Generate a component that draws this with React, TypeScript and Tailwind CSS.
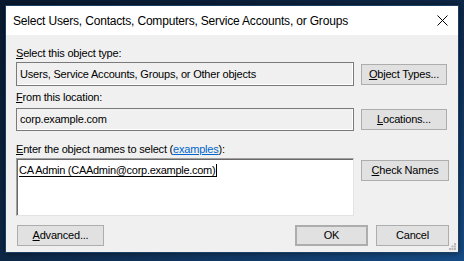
import React from "react";

const F = { fontFamily: '"Liberation Sans", Arial, sans-serif' };

function Btn({ children, w, className = "" }: { children: React.ReactNode; w: string; className?: string }) {
  return (
    <div
      className={`${w} h-[21px] flex items-center justify-center bg-[#e1e1e1] border border-[#adadad] text-[11px] tracking-[-0.2px] text-black ${className}`}
    >
      {children}
    </div>
  );
}

function U({ c }: { c: string }) {
  return <span className="underline underline-offset-[1px]">{c}</span>;
}

export default function App() {
  return (
    <div
      className="w-[464px] h-[261px] overflow-hidden bg-gradient-to-br from-[#0a1a30] via-[#0d2747] to-[#164c86] pt-[5px] pl-[5px]"
      style={F}
    >
      <div className="w-[454px] h-[248px] flex flex-col border border-[#1c3f66] shadow-[0_0_6px_rgba(0,0,0,0.5)]">
        {/* Title bar */}
        <div className="h-[29px] bg-white flex items-center justify-between pl-[7px] pr-[8px]">
          <span className="text-[12px] tracking-[-0.18px] text-black leading-none">
            Select Users, Contacts, Computers, Service Accounts, or Groups
          </span>
          <svg width="11" height="11" viewBox="0 0 11 11" className="mr-[2px]">
            <path d="M0.5 0.5L10.5 10.5M10.5 0.5L0.5 10.5" stroke="#000" strokeWidth="1" />
          </svg>
        </div>
        {/* Body */}
        <div className="flex-1 bg-[#f0f0f0] flex flex-col pl-[10px] pr-[9px] pt-[12px] relative text-[11px] tracking-[-0.2px]">
          <div className="h-[13px] leading-[13px] text-black">
            <U c="S" />elect this object type:
          </div>
          <div className="flex items-center gap-[7px] mt-[2px]">
            <div className="w-[338px] h-[24px] border border-[#7a7a7a] bg-[#f0f0f0] shadow-[inset_-1px_-1px_0_#ffffff] flex items-center pl-[3px] text-black">
              Users, Service Accounts, Groups, or Other objects
            </div>
            <Btn w="w-[86px]">
              <span>
                <U c="O" />bject Types...
              </span>
            </Btn>
          </div>
          <div className="h-[13px] leading-[13px] text-black mt-[5px]">
            <U c="F" />rom this location:
          </div>
          <div className="flex items-center gap-[7px] mt-[4px]">
            <div className="w-[338px] h-[23px] border border-[#7a7a7a] bg-[#f0f0f0] shadow-[inset_-1px_-1px_0_#ffffff] flex items-center pl-[3px] text-black">
              corp.example.com
            </div>
            <Btn w="w-[86px]">
              <span>
                <U c="L" />ocations...
              </span>
            </Btn>
          </div>
          <div className="h-[13px] leading-[13px] text-black mt-[12px]">
            <U c="E" />nter the object names to select (
            <span className="text-[#0066cc] underline">examples</span>):
          </div>
          <div className="flex items-start gap-[7px] mt-[2px]">
            <div className="w-[338px] h-[58px] bg-white border-t border-l border-[#a0a0a0] border-r border-b border-r-[#e3e3e3] border-b-[#e3e3e3] shadow-[inset_1px_1px_0_#696969] pl-[2px] pt-[3px]">
              <span className="inline-block leading-[12px] tracking-[-0.28px] text-black border-b border-black border-r pr-[1px]">
                CA Admin (CAAdmin@corp.example.com)
              </span>
            </div>
            <Btn w="w-[88px]" className="mt-[2px]">
              <span>
                <U c="C" />heck Names
              </span>
            </Btn>
          </div>
          <div className="flex items-center mt-[9px] pl-[1px]">
            <Btn w="w-[87px]">
              <span>
                <U c="A" />dvanced...
              </span>
            </Btn>
            <div className="flex-1" />
            <Btn w="w-[73px]" className="border-2 border-[#0078d7]">
              OK
            </Btn>
            <Btn w="w-[73px]" className="ml-[8px]">
              Cancel
            </Btn>
          </div>
          <svg width="7" height="7" viewBox="0 0 7 7" className="absolute right-[2px] bottom-[2px]">
            <rect x="5" y="0" width="2" height="2" fill="#b8b8b8" />
            <rect x="2.5" y="2.5" width="2" height="2" fill="#b8b8b8" />
            <rect x="5" y="2.5" width="2" height="2" fill="#b8b8b8" />
            <rect x="0" y="5" width="2" height="2" fill="#b8b8b8" />
            <rect x="2.5" y="5" width="2" height="2" fill="#b8b8b8" />
            <rect x="5" y="5" width="2" height="2" fill="#b8b8b8" />
          </svg>
        </div>
      </div>
    </div>
  );
}
